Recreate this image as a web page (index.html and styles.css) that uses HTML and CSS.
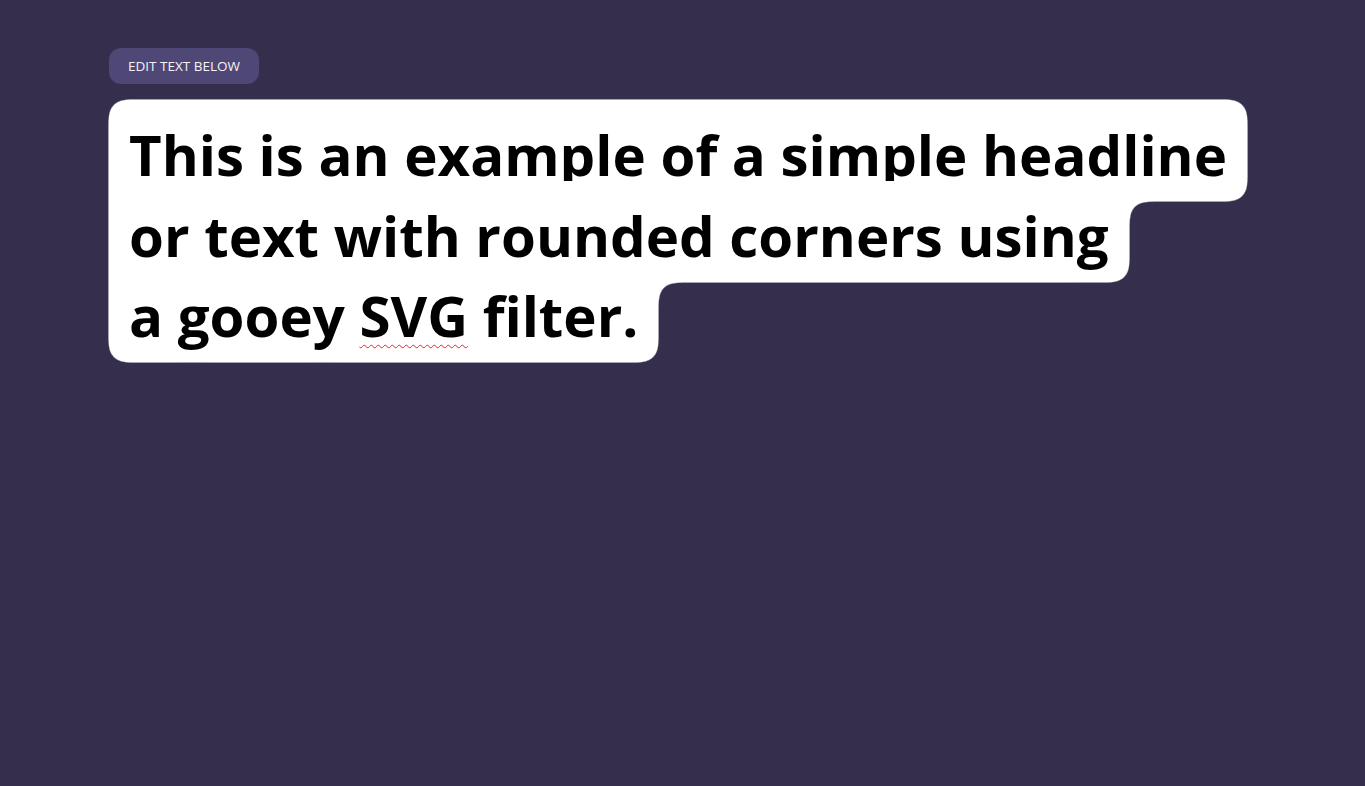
FILE: index.html
```html
<!DOCTYPE html>
<html lang="en">
<head>
<meta charset="utf-8">
<title>Gooey headline</title>
<link rel="stylesheet" href="styles.css">
</head>
<body>
<main class="page">
  <button class="edit-btn" type="button">EDIT TEXT BELOW</button>
  <h1 class="headline" contenteditable="true" spellcheck="false"><span class="hl">This is an example of a simple headline <br>or text with rounded corners using <br>a gooey <span class="typo">SVG</span> filter.</span></h1>
</main>
<svg class="defs" width="0" height="0" aria-hidden="true">
  <defs>
    <filter id="goo">
      <feGaussianBlur in="SourceGraphic" stdDeviation="10" result="blur"/>
      <feColorMatrix in="blur" mode="matrix" values="1 0 0 0 0  0 1 0 0 0  0 0 1 0 0  0 0 0 20 -9" result="goo"/>
      <feComposite in="SourceGraphic" in2="goo" operator="atop"/>
    </filter>
  </defs>
</svg>
</body>
</html>
```
FILE: styles.css
```css
html, body {
  margin: 0;
  padding: 0;
  background: #352f4d;
  height: 100%;
}
.page {
  padding: 48px 0 0 109px;
  font-family: "Open Sans", "Noto Sans", sans-serif;
}
.edit-btn {
  display: block;
  width: 150px;
  height: 36px;
  border: 0;
  border-radius: 12px;
  background: #4f4775;
  color: #f4f3f8;
  font-family: "Open Sans", sans-serif;
  font-size: 13.5px;
  letter-spacing: 0;
  padding: 0;
  cursor: pointer;
}
.headline {
  margin: 31px 0 0 0;
  font-size: 56.4px;
  font-weight: 700;
  line-height: 80.5px;
  color: #000;
  filter: url(#goo);
  outline: none;
}
.hl {
  background: #fff;
  padding: 16px 20px 8px;
  box-decoration-break: clone;
  -webkit-box-decoration-break: clone;
}
.typo {
  text-decoration: underline wavy #e0262f;
  text-decoration-thickness: 1px;
  text-underline-offset: 7px;
}
.defs {
  position: absolute;
}
```
